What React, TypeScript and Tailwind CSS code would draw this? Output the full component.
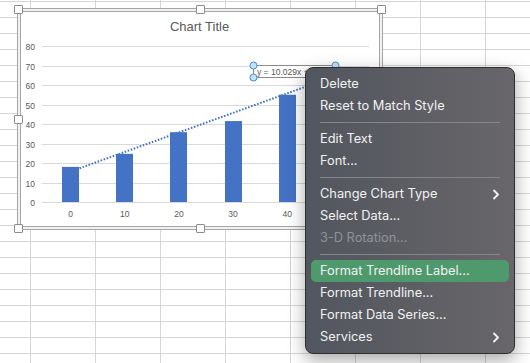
import { Fragment } from 'react';

type MenuItem =
  | { label: string; sub?: boolean; disabled?: boolean; active?: boolean }
  | 'sep';

const menu: MenuItem[] = [
  { label: 'Delete' },
  { label: 'Reset to Match Style' },
  'sep',
  { label: 'Edit Text' },
  { label: 'Font...' },
  'sep',
  { label: 'Change Chart Type', sub: true },
  { label: 'Select Data...' },
  { label: '3-D Rotation...', disabled: true },
  'sep',
  { label: 'Format Trendline Label...', active: true },
  { label: 'Format Trendline...' },
  { label: 'Format Data Series...' },
  { label: 'Services', sub: true },
];

const bars = [18, 24.7, 35.8, 41.5, 55, 66];
const ticks = [0, 10, 20, 30, 40, 50, 60, 70, 80];
const toY = (v: number) => 202 - v * 1.95;
const cx = (i: number) => 70.5 + i * 54.2;
const font = "'Liberation Sans', Arial, sans-serif";

const Sheet = () => (
  <div className="flex flex-col">
    {Array.from({ length: 24 }).map((_, r) => (
      <div key={r} className={`flex shrink-0 ${r === 0 ? 'h-[2px]' : 'h-[16px]'}`}>
        <div className="w-[31px] shrink-0 border-r border-b border-[#d6d6d6]" />
        {Array.from({ length: 8 }).map((_, c) => (
          <div key={c} className="w-[65px] shrink-0 border-r border-b border-[#d6d6d6]" />
        ))}
      </div>
    ))}
  </div>
);

const Handle = ({ hidden }: { hidden?: boolean }) => (
  <div
    className={`w-[9px] h-[9px] bg-white border border-[#8c8c8c] rounded-[1px] ${hidden ? 'invisible' : ''}`}
  />
);

const Plot = () => (
  <svg className="block" width={358} height={214} viewBox="21 12 358 214">
    <text x={199.5} y={30.5} textAnchor="middle" fontSize={13} fill="#595959" fontFamily={font}>
      Chart Title
    </text>

    {ticks.map((t) => (
      <Fragment key={t}>
        <line
          x1={42}
          x2={369}
          y1={Math.round(toY(t)) + 0.5}
          y2={Math.round(toY(t)) + 0.5}
          stroke="#d9d9d9"
          strokeWidth={1}
        />
        <text x={35} y={Math.round(toY(t)) + 3.5} textAnchor="end" fontSize={8.5} fill="#595959" fontFamily={font}>
          {t}
        </text>
      </Fragment>
    ))}

    {/* trendline */}
    <line
      x1={cx(0)}
      y1={toY(10.029 + 5.6)}
      x2={cx(5)}
      y2={toY(10.029 * 6 + 5.6)}
      stroke="#4472c4"
      strokeWidth={2}
      strokeDasharray="1.6 1.6"
    />

    {bars.map((v, i) => (
      <Fragment key={i}>
        <rect x={Math.round(cx(i) - 8.5)} y={toY(v)} width={17} height={202 - toY(v)} fill="#4472c4" />
        {i < 5 && (
          <text x={cx(i)} y={217} textAnchor="middle" fontSize={8.5} fill="#595959" fontFamily={font}>
            {i * 10}
          </text>
        )}
      </Fragment>
    ))}

    {/* trendline label */}
    <rect x={253.5} y={65.5} width={82} height={12} fill="white" stroke="#8a8a8a" strokeWidth={1} />
    <text x={257} y={74.5} fontSize={8.5} fill="#595959" fontFamily={font}>
      y = 10.029x + 5.6
    </text>
    {[
      [253.5, 65.5],
      [253.5, 77.5],
      [335.5, 65.5],
      [335.5, 77.5],
    ].map(([x, y], i) => (
      <circle key={i} cx={x} cy={y} r={3.5} fill="#c6e2f7" stroke="#3a8fd8" strokeWidth={1} />
    ))}
  </svg>
);

const Chart = () => (
  <div className="absolute left-[17px] top-[8px] w-[366px] h-[222px]">
    {/* double frame */}
    <div className="w-full h-full border border-[#a5a5a5] bg-[#f2f2f2] p-[2px]">
      <div className="w-full h-full border border-[#a5a5a5] bg-white">
        <Plot />
      </div>
    </div>

    {/* resize handles */}
    <div className="absolute inset-[-3px] flex flex-col justify-between">
      {[0, 1, 2].map((r) => (
        <div key={r} className="flex justify-between">
          <Handle />
          <Handle hidden={r === 1} />
          <Handle />
        </div>
      ))}
    </div>
  </div>
);

const Chevron = () => (
  <svg width="8" height="11" viewBox="0 0 8 11" className="shrink-0">
    <path
      d="M2 1.5l4 4-4 4"
      fill="none"
      stroke="#f2f2f2"
      strokeWidth={1.8}
      strokeLinecap="round"
      strokeLinejoin="round"
    />
  </svg>
);

const ContextMenu = () => (
  <div className="absolute left-[305px] top-[67px] w-[210px] rounded-[8px] border border-[#2e2e30] bg-gradient-to-r from-[#52565e] to-[#68666a] p-[5px] shadow-[0_6px_18px_rgba(0,0,0,0.35)] font-['Inter',_'Liberation_Sans',_sans-serif] text-[12.8px] leading-none">
    {menu.map((item, i) =>
      item === 'sep' ? (
        <div key={i} className="h-[11px] flex items-center px-[9px]">
          <div className="h-px w-full bg-[#85858a]" />
        </div>
      ) : (
        <div
          key={i}
          className={`h-[22px] flex items-center justify-between px-[9px] rounded-[5px] ${
            item.active ? 'bg-[#4e9a6d]' : ''
          } ${item.disabled ? 'text-white/35' : 'text-[#f2f2f2]'}`}
        >
          <span>{item.label}</span>
          {item.sub && <Chevron />}
        </div>
      )
    )}
  </div>
);

export default function App() {
  return (
    <div className="relative w-[530px] h-[363px] overflow-hidden bg-white">
      <Sheet />
      <Chart />
      <ContextMenu />
    </div>
  );
}
